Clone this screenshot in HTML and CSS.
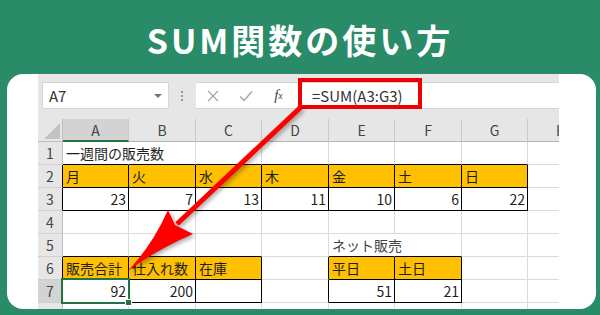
FILE: index.html
```html
<!DOCTYPE html>
<html lang="ja">
<head>
    <meta charset="UTF-8">
    <title>SUM関数の使い方</title>
    <link rel="stylesheet" href="styles.css">
</head>
<body>
    <div class="banner">
        <h1 class="title">SUM関数の使い方</h1>
    </div>

    <div class="card">
        <div class="excel">
            <!-- Barre de formule -->
            <div class="formula-bar">
                <div class="name-box">
                    <span>A7</span>
                    <span class="caret"></span>
                </div>
                <div class="dots"></div>
                <div class="formula-box">
                    <span class="btn">
                        <svg width="12" height="12" viewBox="0 0 12 12"><path d="M1 1L11 11M11 1L1 11" stroke="#a6a6a6" stroke-width="1.3" fill="none"/></svg>
                    </span>
                    <span class="btn">
                        <svg width="14" height="12" viewBox="0 0 14 12"><path d="M1 6.5L5 10.5L13 1.5" stroke="#a6a6a6" stroke-width="1.3" fill="none"/></svg>
                    </span>
                    <span class="btn fx">f<sub>x</sub></span>
                    <span class="formula">=SUM(A3:G3)</span>
                </div>
            </div>

            <!-- Feuille -->
            <div class="sheet">
                <div class="corner"></div>
                <div class="ch sel">A</div>
                <div class="ch">B</div>
                <div class="ch">C</div>
                <div class="ch">D</div>
                <div class="ch">E</div>
                <div class="ch">F</div>
                <div class="ch">G</div>
                <div class="ch">H</div>

                <div class="rh">1</div>
                <div class="cell bb nb">一週間の販売数</div>
                <div class="cell bb"></div>
                <div class="cell bb"></div>
                <div class="cell bb"></div>
                <div class="cell bb"></div>
                <div class="cell bb"></div>
                <div class="cell bb"></div>
                <div class="cell"></div>

                <div class="rh br">2</div>
                <div class="cell y br bb">月</div>
                <div class="cell y br bb">火</div>
                <div class="cell y br bb">水</div>
                <div class="cell y br bb">木</div>
                <div class="cell y br bb">金</div>
                <div class="cell y br bb">土</div>
                <div class="cell y br bb">日</div>
                <div class="cell"></div>

                <div class="rh br">3</div>
                <div class="cell num br bb">23</div>
                <div class="cell num br bb">7</div>
                <div class="cell num br bb">13</div>
                <div class="cell num br bb">11</div>
                <div class="cell num br bb">10</div>
                <div class="cell num br bb">6</div>
                <div class="cell num br bb">22</div>
                <div class="cell"></div>

                <div class="rh">4</div>
                <div class="cell"></div>
                <div class="cell"></div>
                <div class="cell"></div>
                <div class="cell"></div>
                <div class="cell"></div>
                <div class="cell"></div>
                <div class="cell"></div>
                <div class="cell"></div>

                <div class="rh">5</div>
                <div class="cell bb"></div>
                <div class="cell bb"></div>
                <div class="cell bb"></div>
                <div class="cell"></div>
                <div class="cell bb nb label">ネット販売</div>
                <div class="cell bb"></div>
                <div class="cell"></div>
                <div class="cell"></div>

                <div class="rh br">6</div>
                <div class="cell y br bb">販売合計</div>
                <div class="cell y br bb">仕入れ数</div>
                <div class="cell y br bb">在庫</div>
                <div class="cell br"></div>
                <div class="cell y br bb">平日</div>
                <div class="cell y br bb">土日</div>
                <div class="cell"></div>
                <div class="cell"></div>

                <div class="rh br rsel">7</div>
                <div class="cell num br bb active">92</div>
                <div class="cell num br bb">200</div>
                <div class="cell br bb"></div>
                <div class="cell br"></div>
                <div class="cell num br bb">51</div>
                <div class="cell num br bb">21</div>
                <div class="cell"></div>
                <div class="cell"></div>

                <div class="rh"></div>
                <div class="cell"></div>
                <div class="cell"></div>
                <div class="cell"></div>
                <div class="cell"></div>
                <div class="cell"></div>
                <div class="cell"></div>
                <div class="cell"></div>
                <div class="cell"></div>
            </div>
        </div>

        <!-- Encadré rouge et flèche -->
        <div class="callout"></div>
        <svg class="arrow" width="589" height="235" viewBox="0 0 589 235">
            <line x1="294" y1="33" x2="170" y2="150" stroke="#ff0000" stroke-width="5"/>
            <path d="M121 197 Q146 170 161 136 L168 151 L186 160 Q149 176 121 197 Z" fill="#ff0000"/>
        </svg>
    </div>
</body>
</html>
```

FILE: styles.css
```css
body {
    margin: 0;
    width: 600px;
    height: 315px;
    overflow: hidden;
    background-color: #2a8b69;
    font-family: "Noto Sans CJK JP", sans-serif;
}

.banner {
    height: 74px;
    display: flex;
    justify-content: center;
    align-items: center;
}

.title {
    margin: 0;
    padding-top: 4px;
    color: #ffffff;
    font-size: 34px;
    font-weight: bold;
    letter-spacing: 3px;
}

.card {
    position: relative;
    height: 235px;
    margin: 0 4px 0 7px;
    padding-left: 31px;
    background-color: #ffffff;
    border-radius: 16px;
    overflow: hidden;
}

.excel {
    width: 521px;
    height: 100%;
    background-color: #e6e6e6;
    overflow: hidden;
}

/* Formula bar */
.formula-bar {
    display: flex;
    align-items: center;
    height: 45px;
    padding: 8px 0 10px 4px;
    box-sizing: border-box;
}

.name-box {
    display: flex;
    justify-content: space-between;
    align-items: center;
    width: 127px;
    height: 27px;
    padding: 0 6px;
    box-sizing: border-box;
    background-color: #ffffff;
    border: 1px solid #d6d6d6;
    font-size: 15px;
    color: #333;
}

.caret {
    width: 0;
    height: 0;
    border-left: 4px solid transparent;
    border-right: 4px solid transparent;
    border-top: 4px solid #777;
}

.dots {
    width: 2px;
    height: 10px;
    margin: 0 13px 0 12px;
    background: repeating-linear-gradient(#9a9a9a 0 2px, transparent 2px 4px);
}

.formula-box {
    flex: 1;
    display: flex;
    align-items: center;
    height: 27px;
    background-color: #ffffff;
    border-top: 1px solid #d6d6d6;
    border-bottom: 1px solid #d6d6d6;
    box-sizing: border-box;
}

.btn {
    width: 33px;
    display: flex;
    justify-content: center;
    align-items: center;
}

.fx {
    font-family: "Liberation Serif", serif;
    font-style: italic;
    font-size: 15px;
    color: #444;
}

.fx sub {
    font-size: 10px;
    vertical-align: -1px;
}

.formula {
    margin-left: 17px;
    font-size: 15px;
    color: #333;
}

/* Sheet */
.sheet {
    display: grid;
    grid-template-columns: 25px 66px 67px 66px 67px 66px 67px 66px 67px;
    grid-auto-rows: 23px;
    width: 558px;
    background-color: #ffffff;
    font-size: 14px;
    color: #1e1e1e;
}

.corner, .ch, .rh {
    background-color: #e6e6e6;
    color: #444;
    display: flex;
    justify-content: center;
    align-items: center;
    box-sizing: border-box;
}

.corner {
    position: relative;
    border-right: 1px solid #bdbdbd;
    border-bottom: 1px solid #bdbdbd;
}

.corner::after {
    content: "";
    position: absolute;
    right: 2px;
    bottom: 2px;
    border-left: 16px solid transparent;
    border-bottom: 16px solid #c2c2c2;
}

.ch {
    border-right: 1px solid #c9c9c9;
    border-bottom: 1px solid #b5b5b5;
    background-color: #e6e6e6;
}

.ch.sel {
    background-color: #d3d3d3;
    border-bottom: 2px solid #217346;
}

.rh {
    border-right: 1px solid #bdbdbd;
    border-bottom: 1px solid #cfcfcf;
}

.rh.rsel {
    background-color: #d3d3d3;
}

.cell {
    position: relative;
    display: flex;
    align-items: center;
    padding: 0 3px;
    box-sizing: border-box;
    white-space: nowrap;
    border-right: 1px solid #dadada;
    border-bottom: 1px solid #dadada;
}

.cell.y {
    background-color: #ffc000;
}

.cell.num {
    justify-content: flex-end;
    padding-right: 2px;
}

.cell.label {
    color: #444;
}

.br {
    border-right-color: #000 !important;
}

.bb {
    border-bottom-color: #000;
}

.nb {
    border-right-color: transparent;
}

.cell.active::after {
    content: "";
    position: absolute;
    top: -2px;
    left: -2px;
    right: -2px;
    bottom: -2px;
    border: 2px solid #217346;
}

.cell.active::before {
    content: "";
    position: absolute;
    right: -4px;
    bottom: -4px;
    width: 5px;
    height: 5px;
    background-color: #217346;
    border: 1px solid #ffffff;
    z-index: 1;
}

/* Red callout */
.callout {
    position: absolute;
    left: 291px;
    top: 4px;
    width: 124px;
    height: 31px;
    box-sizing: border-box;
    border: 4px solid #ee0000;
}

.arrow {
    position: absolute;
    left: 0;
    top: 0;
    filter: drop-shadow(2px 2px 2px rgba(0, 0, 0, 0.35));
}
```
